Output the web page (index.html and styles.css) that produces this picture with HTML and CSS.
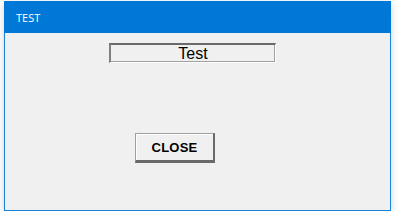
FILE: index.html
```html
<!DOCTYPE html>
<html lang="en">
<head>
  <meta charset="UTF-8">
  <title>TEST</title>
  <link rel="stylesheet" href="styles.css">
</head>
<body>

  <div class="window">
    <div class="title-bar">TEST</div>
    <div class="window-body">
      <div class="text-box">Test</div>
      <button class="close-button">CLOSE</button>
    </div>
  </div>

</body>
</html>
```

FILE: styles.css
```css
body {
  margin: 0;
  background-color: #ffffff;
  font-family: "Liberation Sans", Arial, sans-serif;
}

.window {
  margin: 1px 0 0 4px;
  width: 387px;
  height: 210px;
  box-sizing: border-box;
  border: 1px solid #1883d7;
  border-top: none;
  background-color: #f0f0f0;
  box-shadow: 0 2px 8px rgba(0, 0, 0, 0.18);
  display: flex;
  flex-direction: column;
}

.title-bar {
  height: 32px;
  margin: 0 -1px;
  padding-left: 12px;
  background-color: #0078d7;
  color: #ffffff;
  font-family: "Open Sans", "Noto Sans", sans-serif;
  font-size: 11px;
  line-height: 33px;
}

.window-body {
  display: flex;
  flex-direction: column;
  align-items: flex-start;
  padding-top: 10px;
}

.text-box {
  margin-left: 104px;
  width: 167px;
  height: 20px;
  box-sizing: border-box;
  border-top: 2px solid #696969;
  border-left: 2px solid #808080;
  border-right: 1px solid #ffffff;
  border-bottom: 1px solid #ffffff;
  box-shadow: -1px -1px 0 #a0a0a0 inset;
  text-align: center;
  font-size: 16px;
  line-height: 18px;
  color: #000000;
}

.close-button {
  margin: 70px 0 0 130px;
  width: 80px;
  height: 30px;
  padding: 0;
  background-color: #f0f0f0;
  border-top: 1px solid #a0a0a0;
  border-left: 1px solid #a0a0a0;
  border-right: 2px solid #696969;
  border-bottom: 3px solid #696969;
  box-shadow: 1px 1px 0 #ffffff inset;
  font-family: "Liberation Sans", Arial, sans-serif;
  font-weight: bold;
  font-size: 13px;
  letter-spacing: 0.2px;
  color: #000000;
}
```
